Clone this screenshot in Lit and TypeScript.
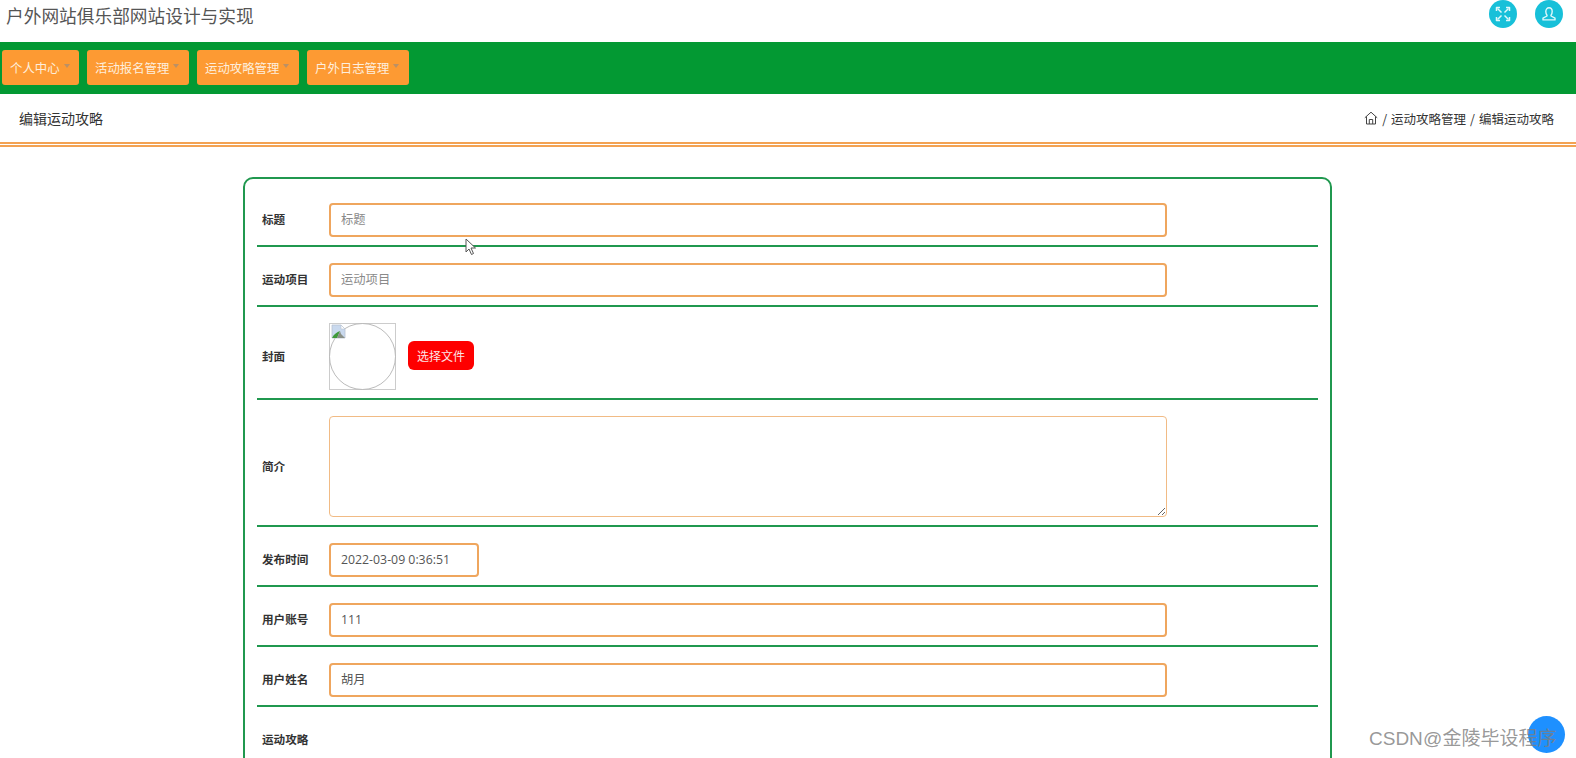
import { LitElement, html, css } from "lit";
import { customElement } from "lit/decorators.js";

@customElement("app-root")
export class AppRoot extends LitElement {
  static styles = css`
    :host { display: block; height: 758px; overflow: hidden; position: relative; background: #fff; font-family: "Noto Sans CJK SC", "Open Sans", sans-serif; color: #333; }
    * { box-sizing: border-box; }
    .top { height: 42px; display: flex; justify-content: space-between; padding: 0 13px 0 6px; }
    .title { font-size: 17.7px; line-height: 31px; color: #555; }
    .top-icons { display: flex; gap: 18px; padding-top: 0; }
    .round { width: 28px; height: 28px; border-radius: 50%; background: #17c0d9; display: flex; align-items: center; justify-content: center; }
    .nav { height: 52px; background: #039933; display: flex; align-items: center; gap: 8px; padding: 0 0 1px 2px; }
    .nav-btn { height: 35px; width: 102px; background: #fd9a33; border-radius: 3px; color: #fdeedd; font-size: 12.4px; display: flex; align-items: center; padding-left: 8px; gap: 4px; white-space: nowrap; }
    .nav-btn.first { width: 77px; }
    .caret { width: 0; height: 0; border-left: 3.5px solid transparent; border-right: 3.5px solid transparent; border-top: 4px solid #bb9065; margin-top: -3px; }
    .head { height: 48px; display: flex; justify-content: space-between; align-items: center; padding: 0 22px 0 19px; }
    .head h1 { font-size: 14px; font-weight: 400; margin: 0; color: #333; }
    .crumb { display: flex; align-items: center; font-size: 12.5px; color: #333; gap: 4px; }
    .rule { height: 5px; border-top: 2px solid #f3a252; border-bottom: 2px solid #f3a252; }
    .card { width: 1089px; margin: 30px 0 0 243px; border: 2px solid #20984f; border-radius: 10px; padding: 24px 12px 0; }
    .row { display: flex; align-items: center; padding-bottom: 8px; margin-bottom: 16px; border-bottom: 2px solid #20984f; }
    .row.plain { border-bottom: 0; }
    .label { width: 72px; flex: none; padding: 0 0 2px 5px; font-size: 11.6px; font-weight: 700; color: #333; }
    .input { width: 838px; height: 34px; border: 2px solid #efa65e; border-radius: 4px; padding: 0 10px 2px; font: 12.3px/28px "Open Sans", "Noto Sans CJK SC", sans-serif; color: #555; outline: none; background: #fff; display: block; }
    .input::placeholder { color: #8a8a8a; }
    .input.date { width: 150px; }
    .area { width: 838px; height: 101px; border: 1px solid #f1bb85; border-radius: 4px; display: block; outline: none; background: #fff; }
    .cover { display: flex; align-items: center; gap: 12px; }
    .thumb { width: 67px; height: 67px; border: 1px solid #ccc; position: relative; display: block; }
    .disc { position: absolute; inset: -1px; border-radius: 50%; border: 1px solid #bbb; }
    .broken { position: absolute; left: 1px; top: 0; }
    .pick { width: 66px; height: 29px; margin-bottom: 3px; border-radius: 6px; background: #fe0000; color: #fbe6e6; font-size: 12px; display: flex; align-items: center; justify-content: center; }
    .fab { position: absolute; left: 1528px; top: 716px; width: 37px; height: 37px; border-radius: 50%; background: #1e90ff; }
    .mark { position: absolute; left: 1369px; top: 726px; font-size: 19px; line-height: 26px; word-spacing: -5px; color: rgba(125,125,125,.8); white-space: nowrap; font-family: "Liberation Sans", "Noto Sans CJK SC", sans-serif; }
    .cursor { position: absolute; left: 465px; top: 238px; display: block; }
  `;

  private row(label: string, ph: string, val = "", cls = "") {
    return html`<div class="row"><div class="label">${label}</div><input class="input ${cls}" placeholder=${ph} .value=${val} /></div>`;
  }

  render() {
    const menus = ["个人中心", "活动报名管理", "运动攻略管理", "户外日志管理"];
    return html`
      <div class="top">
        <div class="title">户外网站俱乐部网站设计与实现</div>
        <div class="top-icons">
          <div class="round"><svg width="16" height="16" viewBox="0 0 16 16" fill="none" stroke="#dff8fb" stroke-width="1.5"><path d="M2.500 2.500l4 4M13.500 2.500l-4 4M2.500 13.500l4-4M13.500 13.500l-4-4"/><path d="M1.500 5V1.500H5M11 1.500h3.500V5M1.500 11v3.500H5M11 14.500h3.500V11" stroke-linejoin="round"/></svg></div>
          <div class="round"><svg width="18" height="18" viewBox="0 0 18 18" fill="none" stroke="#dff8fb" stroke-width="1.400" stroke-linejoin="round"><path d="M7 10.200C6.200 9.300 5.800 8 5.800 6.600 5.800 4.300 7.100 2.800 9 2.800s3.200 1.500 3.200 3.800c0 1.400-.4 2.700-1.200 3.600v.8l4 2.200v1.700H3v-1.700l4-2.200z"/></svg></div>
        </div>
      </div>
      <nav class="nav">
        ${menus.map((m, i) => html`<div class="nav-btn ${i === 0 ? "first" : ""}">${m}<span class="caret"></span></div>`)}
      </nav>
      <div class="head">
        <h1>编辑运动攻略</h1>
        <div class="crumb">
          <svg width="14" height="14" viewBox="0 0 14 14" fill="none" stroke="#444" stroke-width="1"><path d="M.8 6.800L7 1.200l6.200 5.600M2.500 5.500v7.500h9V5.500M5.300 13V8.500h3.400V13"/></svg>
          <span>/</span><span>运动攻略管理</span><span>/</span><span>编辑运动攻略</span>
        </div>
      </div>
      <div class="rule"></div>
      <div class="card">
        ${this.row("标题", "标题")}
        ${this.row("运动项目", "运动项目")}
        <div class="row">
          <div class="label">封面</div>
          <div class="cover">
            <div class="thumb">
              <div class="disc"></div>
              <svg class="broken" width="15" height="15" viewBox="0 0 15 15">
                <path d="M1 1h9l4 4v9H1z" fill="#c9d9ee" stroke="#b8c2d0" stroke-width=".8"/>
                <path d="M10 1v4h4z" fill="#fff" stroke="#b8c2d0" stroke-width=".6"/>
                <path d="M1 14c2-4 5-6 8-7l-3 7z" fill="#3f9a3a"/>
                <path d="M6 14l3-7 1 3 4 4z" fill="#8b9188"/>
              </svg>
            </div>
            <div class="pick">选择文件</div>
          </div>
        </div>
        <div class="row"><div class="label">简介</div><textarea class="area"></textarea></div>
        ${this.row("发布时间", "", "2022-03-09 0:36:51", "date")}
        ${this.row("用户账号", "", "111")}
        ${this.row("用户姓名", "", "胡月")}
        <div class="row plain"><div class="label">运动攻略</div><div style="height:34px"></div></div>
      </div>
      <div class="fab"></div>
      <div class="mark">CSDN @金陵毕设程序</div>
      <svg class="cursor" width="13" height="18" viewBox="0 0 13 18"><path d="M1 1v13l3-3 2.500 5.500 2-1L6 10h4.500z" fill="#fff" stroke="#555" stroke-width="1"/></svg>
    `;
  }
}
